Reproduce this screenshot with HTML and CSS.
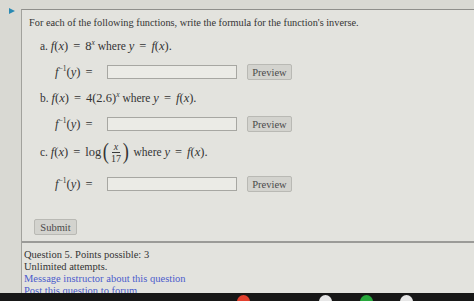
FILE: index.html
```html
<!DOCTYPE html>
<html>
<head>
<meta charset="utf-8">
<link rel="stylesheet" href="styles.css">
</head>
<body>
<div class="page">
  <div class="top">
    <div class="gutter"><span class="tri"></span></div>
    <div class="panel">
      <div class="question">
        <p class="title">For each of the following functions, write the formula for the function's inverse.</p>

        <div class="item">a. <span class="m"><i>f</i>(<i>x</i>)<span class="eq">=</span>8<sup><i>x</i></sup></span> where <span class="m"><i>y</i><span class="eq">=</span><i>f</i>(<i>x</i>).</span></div>
        <div class="answer">
          <span class="lbl m"><i>f</i><sup>−1</sup>(<i>y</i>)<span class="eq">=</span></span>
          <span class="box"></span>
          <span class="btn">Preview</span>
        </div>

        <div class="item">b. <span class="m"><i>f</i>(<i>x</i>)<span class="eq">=</span>4(2.6)<sup><i>x</i></sup></span> where <span class="m"><i>y</i><span class="eq">=</span><i>f</i>(<i>x</i>).</span></div>
        <div class="answer">
          <span class="lbl m"><i>f</i><sup>−1</sup>(<i>y</i>)<span class="eq">=</span></span>
          <span class="box"></span>
          <span class="btn">Preview</span>
        </div>

        <div class="item item-c">c. <span class="m"><i>f</i>(<i>x</i>)<span class="eq">=</span>log</span><span class="paren">(</span><span class="frac"><span class="num"><i>x</i></span><span class="den">17</span></span><span class="paren">)</span> where <span class="m"><i>y</i><span class="eq">=</span><i>f</i>(<i>x</i>).</span></div>
        <div class="answer answer-c">
          <span class="lbl m"><i>f</i><sup>−1</sup>(<i>y</i>)<span class="eq">=</span></span>
          <span class="box"></span>
          <span class="btn">Preview</span>
        </div>

        <div class="submit-row"><span class="btn submit">Submit</span></div>
      </div>
      <div class="footer">
        <div>Question 5. Points possible: 3</div>
        <div>Unlimited attempts.</div>
        <div class="link">Message instructor about this question</div>
        <div class="link">Post this question to forum</div>
      </div>
    </div>
  </div>
  <div class="dock">
    <span class="dot red"></span>
    <span class="dot white w1"></span>
    <span class="dot green"></span>
    <span class="dot white w2"></span>
  </div>
</div>
</body>
</html>
```

FILE: styles.css
```css
html, body {
  margin: 0;
  padding: 0;
}
body {
  background: #d9d9d3;
  font-family: "Liberation Serif", "Times New Roman", serif;
  font-size: 10.5px;
  color: #343434;
  overflow: hidden;
}
.page {
  width: 474px;
  height: 301px;
  display: flex;
  flex-direction: column;
}
.top {
  display: flex;
  height: 293px;
}
.gutter {
  width: 21px;
  flex: none;
  padding-top: 8px;
  padding-left: 9px;
  box-sizing: border-box;
}
.tri {
  display: block;
  width: 0;
  height: 0;
  border-top: 3.5px solid transparent;
  border-bottom: 3.5px solid transparent;
  border-left: 6px solid #2a8ab3;
}
.panel {
  flex: 1;
  margin-top: 9px;
  border-top: 1px solid #8f8f8b;
  border-left: 1px solid #a2a29d;
  background: #e3e3de;
  overflow: hidden;
  display: flex;
  flex-direction: column;
}
.question {
  padding-top: 6px;
  padding-left: 7px;
  height: 226px;
  box-sizing: border-box;
}
.title {
  margin: 0;
  height: 13px;
  line-height: 13px;
  font-size: 10.3px;
}
.item {
  margin-top: 10px;
  height: 14px;
  line-height: 14px;
  padding-left: 11px;
  display: flex;
  align-items: center;
  white-space: pre;
  font-size: 11.5px;
}
.m {
  font-size: 12.5px;
}
.m i {
  font-style: italic;
}
.eq {
  margin: 0 5px;
}
sup {
  font-size: 7.5px;
  line-height: 0;
  vertical-align: 5px;
}
.item + .answer {
  margin-top: 11px;
}
.answer {
  height: 16px;
  display: flex;
  align-items: center;
  padding-left: 26px;
}
.answer + .item {
  margin-top: 11px;
}
.lbl {
  width: 52px;
  flex: none;
  white-space: nowrap;
}
.lbl .eq {
  margin-right: 0;
}
.box {
  width: 130px;
  height: 14px;
  box-sizing: border-box;
  border: 1px solid #a7a7a2;
  background: #ebebe6;
}
.btn {
  display: inline-flex;
  align-items: center;
  justify-content: center;
  height: 16px;
  box-sizing: border-box;
  border: 1px solid #b9b9b4;
  border-radius: 2px;
  background: #d3d3ce;
  color: #4a4a4a;
  font-size: 10.5px;
}
.answer .btn {
  width: 45px;
  margin-left: 10px;
}
.item-c {
  height: 22px;
  margin-top: 9px !important;
}
.paren {
  font-size: 23px;
  line-height: 22px;
  font-weight: 300;
  margin: 0 1px;
  transform: scaleX(0.8);
  display: inline-block;
}
.frac {
  display: inline-flex;
  flex-direction: column;
  align-items: center;
  font-size: 10px;
  line-height: 9px;
}
.num {
  padding: 0 2px 1px;
  font-style: italic;
  border-bottom: 1px solid #3a3a3a;
}
.den {
  padding-top: 1px;
}
.answer-c {
  margin-top: 13px !important;
}
.submit-row {
  margin-top: 27px;
  padding-left: 5px;
}
.submit {
  width: 43px;
}
.footer {
  border-top: 2px solid #9b9b98;
  margin-top: 6px;
  padding-top: 6px;
  padding-left: 2px;
  line-height: 12px;
}
.link {
  color: #4b5ccc;
}
.dock {
  height: 8px;
  background: #171717;
  display: flex;
  align-items: flex-start;
  overflow: hidden;
}
.dot {
  width: 13px;
  height: 13px;
  border-radius: 50%;
  margin-top: 2px;
  flex: none;
}
.red {
  background: #e2402e;
  margin-left: 237px;
}
.white {
  background: #e6e6e6;
}
.w1 {
  margin-left: 69px;
}
.green {
  background: #28a83c;
  margin-left: 28px;
}
.w2 {
  margin-left: 27px;
}
```
